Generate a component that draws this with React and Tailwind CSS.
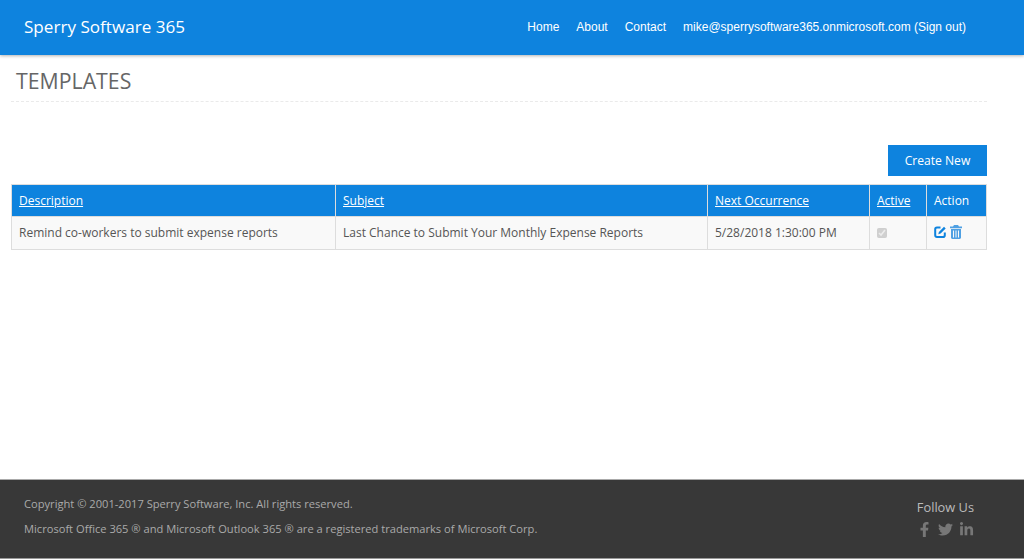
import { FaFacebookF, FaTwitter, FaLinkedinIn } from 'react-icons/fa';

const navLinks = ['Home', 'About', 'Contact', 'mike@sperrysoftware365.onmicrosoft.com (Sign out)'];

// thick rounded square with a small pencil, drawn to match the reference
const EditIcon = () => (
  <svg width="13" height="13" viewBox="0 0 13 13" fill="none">
    <path d="M6.500 2.500H3A1.800 1.800 0 0 0 1.200 4.300v6A1.800 1.800 0 0 0 3 12h6a1.800 1.800 0 0 0 1.800-1.800V7.500" stroke="currentColor" strokeWidth="2" />
    <path d="M4.300 9.200l.6-2.300L10 1.800l1.700 1.700-5.100 5.100z" fill="currentColor" />
  </svg>
);

const TrashIcon = () => (
  <svg width="12" height="14" viewBox="0 0 12 14" fill="currentColor">
    <path d="M4 0h4l1 1.600h3v1.600H0V1.600h3z" />
    <path d="M1 4h10v8.600c0 .8-.6 1.400-1.400 1.400H2.400C1.600 14 1 13.400 1 12.600zM3 5.500v7h1v-7zm2.500 0v7h1v-7zm2.500 0v7h1v-7z" fillRule="evenodd" />
  </svg>
);

const App = () => {
  return (
    <div className="w-[1024px] h-[559px] flex flex-col bg-white overflow-hidden font-['Open_Sans',sans-serif] text-[12px] text-[#555]">
      {/* Header */}
      <header className="h-[55px] shrink-0 bg-[#0e83de] shadow-[0_1px_3px_rgba(0,0,0,0.3)] flex items-center justify-between pl-6 pr-[58px] pb-[2px] text-white">
        <span className="text-[17.1px]">Sperry Software 365</span>
        <nav className="flex gap-[17px] font-['Liberation_Sans',sans-serif] text-[12px]">
          {navLinks.map((link) => (
            <a key={link} href="#">{link}</a>
          ))}
        </nav>
      </header>

      {/* Content */}
      <main className="flex-1 pl-[11px] pr-[37px]">
        <h1 className="h-[47px] pl-[5px] pt-[12px] text-[21.3px] leading-[28px] text-[#666] border-b border-dashed border-[#eaeaea]">TEMPLATES</h1>
        <div className="flex justify-end mt-[43px] mb-[8px]">
          <button className="w-[99px] h-[31px] bg-[#0e83de] text-white text-[12.1px] pt-[1px]">Create New</button>
        </div>
        <table className="w-[976px] table-fixed border-collapse">
          <thead>
            <tr className="h-[32px] bg-[#0e83de] text-white text-left">
              <th className="w-[324px] px-[7px] font-normal border border-[#ddd]"><a href="#" className="underline">Description</a></th>
              <th className="w-[372px] px-[7px] font-normal border border-[#ddd]"><a href="#" className="underline">Subject</a></th>
              <th className="w-[162px] px-[7px] font-normal border border-[#ddd]"><a href="#" className="underline">Next Occurrence</a></th>
              <th className="w-[57px] px-[7px] font-normal border border-[#ddd]"><a href="#" className="underline">Active</a></th>
              <th className="px-[7px] font-normal border border-[#ddd]">Action</th>
            </tr>
          </thead>
          <tbody>
            <tr className="h-[33px] bg-[#f9f9f9]">
              <td className="px-[7px] border border-[#ddd]">Remind co-workers to submit expense reports</td>
              <td className="px-[7px] border border-[#ddd]">Last Chance to Submit Your Monthly Expense Reports</td>
              <td className="px-[7px] border border-[#ddd]">5/28/2018 1:30:00 PM</td>
              <td className="px-[7px] border border-[#ddd]">
                <input type="checkbox" checked disabled readOnly className="block w-[10px] h-[10px] m-0" />
              </td>
              <td className="px-[7px] border border-[#ddd]">
                <div className="flex items-center gap-[3px] text-[#0e83de] -mt-[3px]">
                  <EditIcon />
                  <span className="text-[#4fa0e3]"><TrashIcon /></span>
                </div>
              </td>
            </tr>
          </tbody>
        </table>
      </main>

      {/* Footer */}
      <footer className="h-[80px] shrink-0 bg-[#383838] border-t border-t-[#aaa] border-b border-b-[#999] flex justify-between pl-6 pr-[50px] text-[11.14px] text-[#aaa]">
        <div className="pt-[16px]">
          <p className="leading-[15px]">Copyright © 2001-2017 Sperry Software, Inc. All rights reserved.</p>
          <p className="leading-[15px] mt-[10px]">Microsoft Office 365 ® and Microsoft Outlook 365 ® are a registered trademarks of Microsoft Corp.</p>
        </div>
        <div className="pt-[18px]">
          <p className="text-[12.8px] leading-[18px] text-[#bbb]">Follow Us</p>
          <div className="flex items-center gap-[6px] mt-[6px] text-[15px] text-[#777]">
            <FaFacebookF />
            <FaTwitter />
            <FaLinkedinIn />
          </div>
        </div>
      </footer>
    </div>
  );
};

export default App;
